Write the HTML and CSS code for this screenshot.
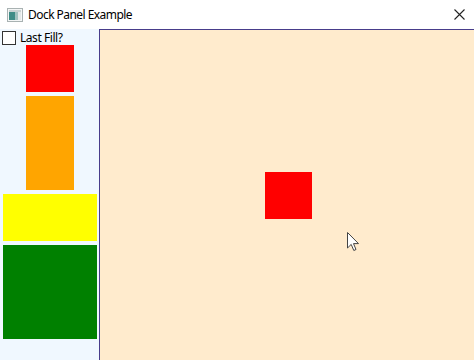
FILE: index.html
```html
<!DOCTYPE html>
<html>
<head>
<meta charset="utf-8">
<link rel="stylesheet" href="styles.css">
</head>
<body>
<div class="window">
  <div class="titlebar">
    <svg class="app-icon" width="16" height="14" viewBox="0 0 16 14">
      <rect x="0.5" y="0.5" width="15" height="13" fill="#f4f6f6" stroke="#a9b2b2"/>
      <rect x="2" y="2" width="12" height="2" fill="#c8d2d2"/>
      <rect x="2" y="4" width="6" height="8" fill="#3e8c86"/>
      <rect x="8" y="4" width="3" height="8" fill="#9fc1be"/>
      <rect x="11" y="4" width="3" height="8" fill="#e3e8e8"/>
    </svg>
    <span class="title">Dock Panel Example</span>
    <svg class="close" width="11" height="11" viewBox="0 0 11 11">
      <path d="M0.5 0.5 L10.5 10.5 M10.5 0.5 L0.5 10.5" stroke="#222" stroke-width="1.1" fill="none"/>
    </svg>
  </div>
  <div class="client">
    <div class="side">
      <label class="check-row"><span class="checkbox"></span><span class="check-label">Last Fill?</span></label>
      <div class="box red-top"></div>
      <div class="box orange"></div>
      <div class="box yellow"></div>
      <div class="box green"></div>
    </div>
    <div class="fill">
      <div class="center-square"></div>
      <svg class="cursor" width="13" height="20" viewBox="0 0 13 20">
        <path d="M0.5 0.5 L0.5 16 L4.2 12.4 L6.8 18.5 L9 17.5 L6.5 11.6 L11.5 11.6 Z" fill="#fff" stroke="#444" stroke-width="1" stroke-linejoin="round"/>
      </svg>
    </div>
  </div>
</div>
</body>
</html>
```
FILE: styles.css
```css
html, body {
  margin: 0;
  padding: 0;
  width: 474px;
  height: 360px;
  overflow: hidden;
  font-family: "Noto Sans", "Open Sans", sans-serif;
}
.window {
  width: 474px;
  height: 360px;
  display: flex;
  flex-direction: column;
  background: #fff;
}
.titlebar {
  height: 29px;
  flex: none;
  display: flex;
  align-items: center;
  position: relative;
  background: #fff;
}
.app-icon {
  margin-left: 7px;
}
.title {
  margin-left: 5px;
  font-size: 12px;
  color: #000;
  letter-spacing: -0.55px;
}
.close {
  position: absolute;
  left: 454px;
  top: 9px;
}
.client {
  flex: 1;
  display: flex;
  min-height: 0;
}
.side {
  width: 99px;
  flex: none;
  background: #f0f8ff;
  display: flex;
  flex-direction: column;
}
.check-row {
  display: flex;
  align-items: center;
  height: 16px;
  padding-left: 2px;
}
.checkbox {
  width: 12px;
  height: 12px;
  border: 1px solid #333;
  background: #fff;
  margin-top: 1px;
}
.check-label {
  margin-left: 4px;
  font-size: 12px;
  color: #000;
  letter-spacing: -0.45px;
}
.box { flex: none; }
.red-top {
  width: 48px;
  height: 47px;
  margin: 0 0 4px 26px;
  background: #ff0000;
}
.orange {
  width: 48px;
  height: 94px;
  margin: 0 0 4px 26px;
  background: #ffa500;
}
.yellow {
  width: 94px;
  height: 47px;
  margin: 0 0 4px 3px;
  background: #ffff00;
}
.green {
  width: 94px;
  height: 94px;
  margin: 0 0 0 3px;
  background: #008000;
}
.fill {
  flex: 1;
  background: #ffebcd;
  border-left: 1px solid #483d8b;
  border-top: 1px solid #483d8b;
  display: flex;
  align-items: center;
  justify-content: center;
  position: relative;
}
.center-square {
  width: 47px;
  height: 47px;
  background: #ff0000;
  margin-left: 2px;
}
.cursor {
  position: absolute;
  left: 247px;
  top: 202px;
}
```
